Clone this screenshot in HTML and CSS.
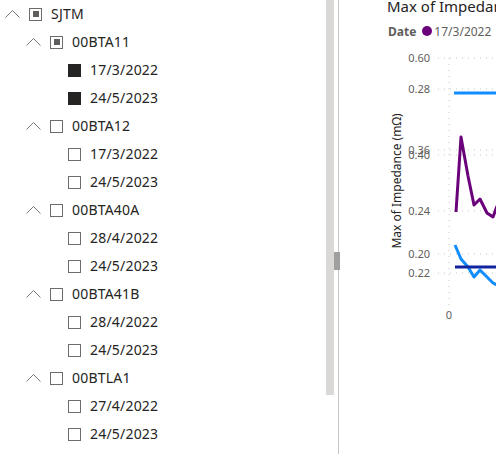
FILE: index.html
```html
<!DOCTYPE html>
<html>
<head>
<meta charset="utf-8">
<link rel="stylesheet" href="styles.css">
</head>
<body>
<div class="page">
  <div class="slicer">
    <div class="row l1"><span class="chev"><svg width="15" height="8" viewBox="0 0 15 8"><polyline points="0.5,7.5 7.5,0.5 14.5,7.5"/></svg></span><span class="box partial"></span><span class="label">SJTM</span></div>
    <div class="row l2"><span class="chev"><svg width="15" height="8" viewBox="0 0 15 8"><polyline points="0.5,7.5 7.5,0.5 14.5,7.5"/></svg></span><span class="box partial"></span><span class="label">00BTA11</span></div>
    <div class="row l3"><span class="box checked"></span><span class="label">17/3/2022</span></div>
    <div class="row l3"><span class="box checked"></span><span class="label">24/5/2023</span></div>
    <div class="row l2"><span class="chev"><svg width="15" height="8" viewBox="0 0 15 8"><polyline points="0.5,7.5 7.5,0.5 14.5,7.5"/></svg></span><span class="box"></span><span class="label">00BTA12</span></div>
    <div class="row l3"><span class="box"></span><span class="label">17/3/2022</span></div>
    <div class="row l3"><span class="box"></span><span class="label">24/5/2023</span></div>
    <div class="row l2"><span class="chev"><svg width="15" height="8" viewBox="0 0 15 8"><polyline points="0.5,7.5 7.5,0.5 14.5,7.5"/></svg></span><span class="box"></span><span class="label">00BTA40A</span></div>
    <div class="row l3"><span class="box"></span><span class="label">28/4/2022</span></div>
    <div class="row l3"><span class="box"></span><span class="label">24/5/2023</span></div>
    <div class="row l2"><span class="chev"><svg width="15" height="8" viewBox="0 0 15 8"><polyline points="0.5,7.5 7.5,0.5 14.5,7.5"/></svg></span><span class="box"></span><span class="label">00BTA41B</span></div>
    <div class="row l3"><span class="box"></span><span class="label">28/4/2022</span></div>
    <div class="row l3"><span class="box"></span><span class="label">24/5/2023</span></div>
    <div class="row l2"><span class="chev"><svg width="15" height="8" viewBox="0 0 15 8"><polyline points="0.5,7.5 7.5,0.5 14.5,7.5"/></svg></span><span class="box"></span><span class="label">00BTLA1</span></div>
    <div class="row l3"><span class="box"></span><span class="label">27/4/2022</span></div>
    <div class="row l3"><span class="box"></span><span class="label">24/5/2023</span></div>
  </div>
  <div class="track"></div>
  <div class="thumb"></div>
  <div class="divider"></div>
  <div class="chart">
    <div class="title">Max of Impedance (mΩ) by Date and Tag</div>
    <div class="legend"><span class="legend-name">Date</span><span class="dot"></span><span class="legend-item">17/3/2022</span></div>
    <svg class="plot" width="157" height="406" viewBox="339 48 157 406">
      <g class="grid">
        <line x1="438" y1="58" x2="496" y2="58"/>
        <line x1="438" y1="89" x2="496" y2="89"/>
        <line x1="438" y1="150" x2="496" y2="150"/>
        <line x1="438" y1="155" x2="496" y2="155"/>
        <line x1="438" y1="211" x2="496" y2="211"/>
        <line x1="438" y1="254" x2="496" y2="254"/>
        <line x1="438" y1="273" x2="496" y2="273"/>
        <line x1="449" y1="58" x2="449" y2="306"/>
      </g>
      <g class="ylabels">
        <text x="430" y="62">0.60</text>
        <text x="430" y="93">0.28</text>
        <text x="430" y="154">0.36</text>
        <text x="430" y="159">0.40</text>
        <text x="430" y="215">0.24</text>
        <text x="430" y="258">0.20</text>
        <text x="430" y="277">0.22</text>
      </g>
      <text class="xlabel" x="449" y="319">0</text>
      <text class="ytitle" transform="translate(401 181) rotate(-90)">Max of Impedance (mΩ)</text>
      <polyline class="ln lb" points="454,93 500,93"/>
      <polyline class="ln pu" points="456,212 461,137 468,176 474,205 480,199 487,213 493,217 497,206"/>
      <polyline class="ln lb" points="455,245 461,259 468,267 474,277 480,270 487,277 493,283 497,285"/>
      <polyline class="ln db" points="455,267 500,267"/>
    </svg>
  </div>
</div>
</body>
</html>
```
FILE: styles.css
```css
html, body {
  margin: 0;
  padding: 0;
  background: #ffffff;
}
.page {
  position: relative;
  display: flex;
  width: 496px;
  height: 454px;
  overflow: hidden;
  font-family: "Segoe UI", "Noto Sans", "Open Sans", sans-serif;
}
.slicer {
  width: 326px;
  flex: none;
  display: flex;
  flex-direction: column;
}
.row {
  height: 28px;
  display: flex;
  align-items: center;
  font-size: 14px;
  color: #252423;
  white-space: nowrap;
}
.row.l1 { padding-left: 5px; }
.row.l2 { padding-left: 26px; }
.row.l3 { padding-left: 68px; }
.chev {
  width: 15px;
  height: 8px;
  margin-right: 9px;
  display: flex;
  margin-top: -1px;
}
.chev svg polyline {
  fill: none;
  stroke: #7a7876;
  stroke-width: 1;
}
.box {
  width: 11px;
  height: 11px;
  border: 1px solid #6e6c6a;
  flex: none;
  display: flex;
  align-items: center;
  justify-content: center;
  margin-right: 9px;
  background: #fff;
}
.box.partial::after {
  content: "";
  width: 6px;
  height: 6px;
  background: #605e5c;
}
.box.checked {
  background: #252423;
  border-color: #252423;
}
.label {
  line-height: 18px;
  letter-spacing: 0.2px;
}
.track {
  width: 8px;
  height: 395px;
  flex: none;
  background: #d9d8d6;
}
.thumb {
  position: absolute;
  left: 334px;
  top: 252px;
  width: 6px;
  height: 18px;
  background: #a19f9d;
}
.divider {
  width: 1px;
  flex: none;
  margin-left: 4px;
  background: #c8c6c4;
}
.chart {
  flex: 1;
  min-width: 0;
  overflow: hidden;
  display: flex;
  flex-direction: column;
}
.title {
  margin-top: -4px;
  padding-left: 48px;
  font-size: 15px;
  line-height: 20px;
  color: #252423;
  white-space: nowrap;
}
.legend {
  margin-top: 7px;
  padding-left: 49px;
  height: 16px;
  display: flex;
  align-items: center;
  font-size: 12px;
  white-space: nowrap;
}
.legend-name {
  font-weight: bold;
  color: #605e5c;
  margin-right: 6px;
}
.dot {
  width: 10px;
  height: 10px;
  border-radius: 50%;
  background: #6b007b;
  margin-right: 2px;
  flex: none;
}
.legend-item {
  color: #605e5c;
}
.plot {
  display: block;
  flex: none;
  margin-top: 9px;
}
.grid line {
  stroke: #c8c6c4;
  stroke-width: 1;
  stroke-dasharray: 1 5;
}
.ylabels text {
  font-size: 11px;
  fill: #605e5c;
  text-anchor: end;
}
.xlabel {
  font-size: 11px;
  fill: #605e5c;
  text-anchor: middle;
}
.ytitle {
  font-size: 12px;
  fill: #252423;
  text-anchor: middle;
}
.ln {
  fill: none;
  stroke-width: 3;
  stroke-linejoin: round;
}
.lb { stroke: #118dff; }
.pu { stroke: #6b007b; }
.db { stroke: #12239e; }
```
